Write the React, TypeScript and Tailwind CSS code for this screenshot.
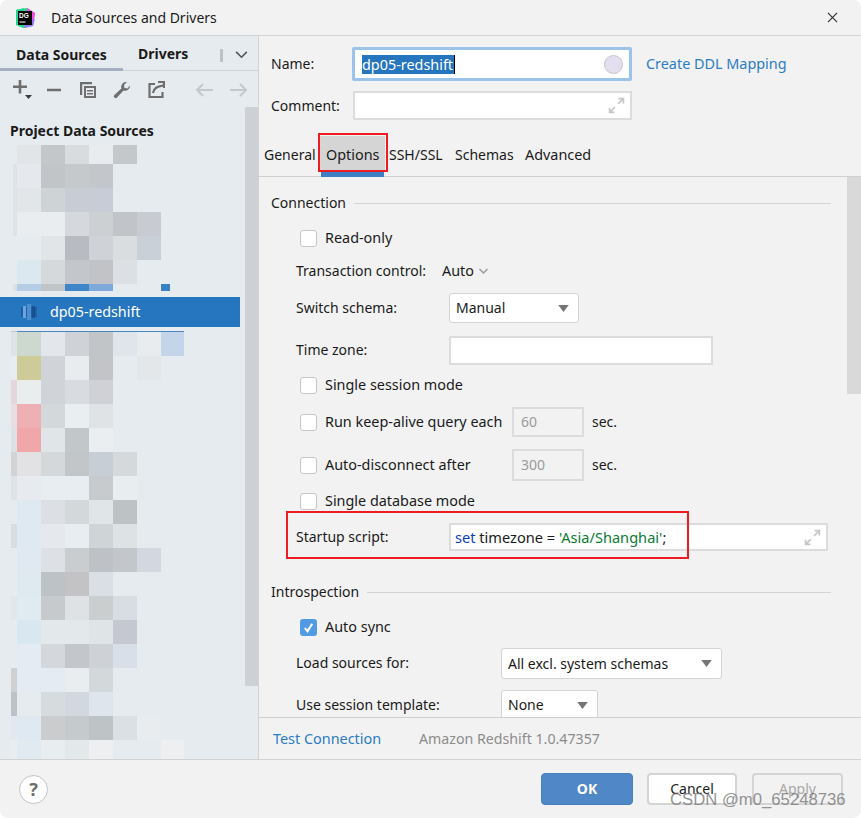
import React from 'react';

const font = { fontFamily: '"Noto Sans", sans-serif' };

// blurred tree rows from the reference: [top, height, [x, width, colour]...]
type Cell = [number, number, string];
const mosaic: [number, number, Cell[]][] = [
  [145, 19, [[17, 24, '#e1e5e8'], [41, 24, '#c3c7ca'], [65, 24, '#d8dcdf'], [89, 24, '#e8ecef'], [113, 24, '#c4c8cb']]],
  [164, 24, [[13, 4, '#dfe3e8'], [17, 24, '#e5e8ec'], [41, 24, '#c1c5c8'], [65, 24, '#c5c9cc'], [89, 24, '#c3c6ca']]],
  [188, 24, [[13, 4, '#dfe3e8'], [17, 24, '#e3e6e9'], [41, 24, '#ced3d6'], [65, 24, '#c8ccd5'], [89, 24, '#c8ccd6']]],
  [212, 24, [[13, 4, '#dfe3e8'], [17, 48, '#e9edf0'], [65, 24, '#d5d8dc'], [89, 24, '#cdd0d3'], [113, 24, '#c1c4c8'], [137, 24, '#c8cbd2']]],
  [236, 24, [[41, 24, '#e1e5e8'], [65, 24, '#b8bcc2'], [89, 24, '#cfd2d6'], [113, 24, '#d9dde0'], [137, 24, '#cad0d8']]],
  [260, 24, [[17, 24, '#dce8f0'], [41, 24, '#d5d9dc'], [65, 24, '#c3c6ca'], [89, 24, '#c1c3c7'], [113, 24, '#dcdfe3']]],
  [284, 7, [[13, 4, '#dde1e4'], [17, 24, '#b5cde5'], [41, 24, '#c0c5c8'], [65, 24, '#3f85c9'], [89, 24, '#7ea9d8'], [161, 9, '#3a80c6']]],
  [331, 1, [[11, 6, '#c5c8cc'], [17, 167, '#5088c6']]],
  [332, 24, [[11, 6, '#e0e3e6'], [17, 24, '#cdd8cf'], [41, 24, '#e3e6eb'], [65, 24, '#cfd2d6'], [89, 24, '#c2c5c8'], [113, 24, '#e0e5ec'], [137, 24, '#e8ecef'], [161, 23, '#c5d5e9']]],
  [356, 24, [[11, 6, '#e9edf0'], [17, 24, '#cdcb97'], [41, 24, '#d0d3d8'], [65, 24, '#e8ecef'], [89, 24, '#c3c4c7'], [137, 24, '#e3e7ea']]],
  [380, 24, [[11, 6, '#e5d5dc'], [17, 24, '#e9edee'], [41, 24, '#d0d3d7'], [65, 24, '#d8dce0'], [89, 24, '#cfd1d6']]],
  [404, 24, [[11, 6, '#e8dde3'], [17, 24, '#eeb0b3'], [41, 24, '#d3d8db'], [65, 24, '#e9eef1'], [89, 24, '#dfe3e6']]],
  [428, 24, [[11, 6, '#dde1e3'], [17, 24, '#efa7aa'], [41, 24, '#e0e5e8'], [65, 24, '#c2c7ca'], [89, 24, '#ebeef1']]],
  [452, 24, [[11, 6, '#d2d3d4'], [17, 24, '#e2e2e4'], [41, 24, '#d4d8db'], [65, 24, '#c3c6c9'], [89, 24, '#c8ced5'], [113, 24, '#d5d9dc']]],
  [476, 24, [[11, 6, '#dfe3e8'], [17, 24, '#e7eaee'], [41, 48, '#e8edf1'], [89, 24, '#c7cbce'], [113, 24, '#e8edf0']]],
  [500, 24, [[17, 24, '#dfe9f1'], [41, 24, '#dce0e5'], [65, 24, '#d3d8db'], [89, 24, '#e0e5e8'], [113, 24, '#bdc2c4']]],
  [524, 24, [[11, 6, '#d9dde0'], [17, 24, '#dfe9f1'], [41, 24, '#e5e9ed'], [65, 24, '#e8edf1'], [89, 24, '#cfd4d7'], [113, 24, '#dde2e5']]],
  [548, 24, [[17, 24, '#e0e9f1'], [41, 24, '#dde0e5'], [65, 24, '#c9cdcf'], [89, 24, '#bec1c5'], [113, 24, '#c3c6ca'], [137, 24, '#d3d8e0']]],
  [572, 24, [[17, 24, '#dfeaf0'], [41, 24, '#bcc2c5'], [65, 24, '#c3c3c6'], [89, 24, '#dadee5']]],
  [596, 24, [[11, 6, '#e3e7ea'], [17, 24, '#e0eaf1'], [41, 24, '#c6cacc'], [65, 24, '#dfe2e5'], [89, 24, '#cbcecf'], [113, 24, '#d8dce3']]],
  [620, 24, [[17, 24, '#d9e8f0'], [41, 48, '#e3e8eb'], [89, 24, '#dfe4e7'], [113, 24, '#c5c8d0']]],
  [644, 24, [[17, 24, '#e5ebf2'], [41, 24, '#d4d8dc'], [65, 24, '#c3c6ca'], [89, 24, '#ced1d5'], [113, 24, '#d8dfe8']]],
  [668, 24, [[11, 6, '#cfd0d2'], [17, 48, '#e5ebf2'], [65, 24, '#e9edf0'], [89, 24, '#d3d8db']]],
  [692, 24, [[11, 6, '#bdc2c8'], [41, 24, '#d6dbde'], [65, 24, '#d3d8e0'], [89, 24, '#dfe5ec']]],
  [716, 24, [[11, 6, '#e3e8f0'], [17, 24, '#dfe9f2'], [41, 24, '#cbcccd'], [65, 24, '#c5cacd'], [89, 24, '#bec3c5'], [113, 24, '#dbe0e4'], [137, 24, '#e8ecef']]],
  [740, 19, [[11, 6, '#e9edf0'], [17, 24, '#e1e9f1'], [41, 24, '#e8edf0'], [65, 24, '#e3e8ea'], [89, 24, '#eeeff0'], [161, 23, '#eeeff0']]],
];

function ExpandIcon() {
  return (
    <svg viewBox="0 0 16 16" className="w-[17px] h-[17px]" fill="none" stroke="#c4c8c8" strokeWidth="1.6">
      <path d="M9.5 6.5 14 2M10 1.5h4.5V6" />
      <path d="M6.5 9.5 2 14M1.5 10v4.500H6" />
    </svg>
  );
}

function Caret() {
  return (
    <svg viewBox="0 0 12 8" className="w-[11px] h-[7px]" fill="#757575">
      <path d="M0 0h12L6 8z" />
    </svg>
  );
}

function Checkbox({ label, checked }: { label: string; checked?: boolean }) {
  return (
    <div className="flex items-center ml-[29px] h-[24px]">
      {checked ? (
        <div className="w-[17px] h-[17px] rounded-[3px] bg-[#509be4] flex items-center justify-center">
          <svg viewBox="0 0 14 14" className="w-[13px] h-[13px]" fill="none" stroke="#fff" strokeWidth="2.2">
            <path d="M3 7.500 6 11l5-8" />
          </svg>
        </div>
      ) : (
        <div className="w-[17px] h-[17px] rounded-[3px] bg-white border border-[#c6c6c6]" />
      )}
      <span className="ml-[8px] whitespace-nowrap text-[14.4px]">{label}</span>
    </div>
  );
}

function Select({ value, className }: { value: string; className: string }) {
  return (
    <div className={`flex items-center justify-between bg-white border border-[#d4d4d4] rounded-[3px] pl-[6px] pr-[9px] ${className}`}>
      <span className="whitespace-nowrap">{value}</span>
      <Caret />
    </div>
  );
}

function Section({ title, className }: { title: string; className: string }) {
  return (
    <div className={`flex items-center h-[20px] mr-[30px] ${className}`}>
      <span>{title}</span>
      <div className="flex-1 h-px bg-[#d4d4d4] ml-[8px]" />
    </div>
  );
}

function NumberRow({ label, value, className }: { label: string; value: string; className: string }) {
  return (
    <div className={`flex items-center ${className}`}>
      <div className="w-[241px]">
        <Checkbox label={label} />
      </div>
      <div className="w-[72px] h-full border-2 border-[#dcdcdc] flex items-center pl-[7px] text-[#9a9a9a]">{value}</div>
      <span className="ml-[8px]">sec.</span>
    </div>
  );
}

function Sidebar() {
  return (
    <div className="w-[259px] shrink-0 bg-[#e6ebf0] border-r border-[#d2d2d2] relative overflow-hidden">
      <div className="h-[35px] flex items-end border-b border-[#d0d3d6] relative font-bold">
        <div className="w-[123px] h-[35px] pl-[16px] pt-[9px] border-b-[3px] border-[#a4b0c2] shrink-0 -mb-px">Data Sources</div>
        <div className="h-[35px] pt-[9px] ml-[15px]">Drivers</div>
        <div className="absolute left-[220px] top-[13px] w-[3px] h-[13px] bg-[#bfc2c4]" />
        <svg viewBox="0 0 14 9" className="absolute left-[235px] top-[15px] w-[13px] h-[8px]" fill="none" stroke="#555" strokeWidth="1.8">
          <path d="M1 1l6 6 6-6" />
        </svg>
      </div>

      {/* toolbar */}
      <div className="h-[37px] flex items-center pl-[13px]">
        <svg viewBox="0 0 20 22" className="w-[20px] h-[22px]" fill="#6e6e6e">
          <path d="M0 6.500h14V9H0zM5.700 1h2.600v13.500H5.700z" />
          <path d="M12 16h7l-3.500 4z" fill="#3c3c3c" />
        </svg>
        <svg viewBox="0 0 14 14" className="w-[14px] h-[14px] ml-[14px]" fill="#6e6e6e">
          <path d="M0 5.800h14v2.400H0z" />
        </svg>
        <svg viewBox="0 0 16 16" className="w-[16px] h-[16px] ml-[19px]" fill="#6e6e6e">
          <path d="M0 0h12v2.200H2.200V13H0z" />
          <path fillRule="evenodd" d="M4 4h12v12H4zM6 6v8h8V6z" />
          <path d="M7 8h6v1.500H7zM7 11h6v1.500H7z" />
        </svg>
        <svg viewBox="0 0 18 18" className="w-[18px] h-[18px] ml-[17px]" fill="#6e6e6e">
          <path d="M17 4.500a5 5 0 0 1-6.500 5L4 16.500a1.800 1.800 0 0 1-2.600-2.600l7-6.500A5 5 0 0 1 14 1l-3 3 .5 3 3 .5 2.300-3z" />
        </svg>
        <svg viewBox="0 0 17 17" className="w-[17px] h-[17px] ml-[17px]" fill="none" stroke="#6e6e6e" strokeWidth="2.2">
          <path d="M7 3H1.500v13h13v-5" />
          <path d="M5 12C6 7 9 5.500 15 4.500" />
          <path d="M10 1h6v6" />
        </svg>
        <svg viewBox="0 0 18 14" className="w-[18px] h-[14px] ml-[30px]" fill="none" stroke="#c6c9cc" strokeWidth="2">
          <path d="M18 7H2M8 1 2 7l6 6" />
        </svg>
        <svg viewBox="0 0 18 14" className="w-[18px] h-[14px] ml-[17px]" fill="none" stroke="#c6c9cc" strokeWidth="2">
          <path d="M0 7h16M10 1l6 6-6 6" />
        </svg>
      </div>

      <div className="pl-[10px] mt-[13px] font-bold leading-[20px]">Project Data Sources</div>

      {/* blurred tree */}
      <svg className="absolute left-0 top-0 w-[240px] h-[723px]" viewBox="0 36 240 723" shapeRendering="crispEdges">
        {mosaic.map(([top, height, cells]) =>
          cells.map(([x, width, color]) => <rect key={`${top}-${x}`} x={x} y={top} width={width} height={height} fill={color} />)
        )}
      </svg>

      <div className="absolute left-0 top-[261px] w-[240px] h-[30px] bg-[#2675bf] flex items-center text-white pl-[20px]">
        <svg viewBox="0 0 18 18" className="w-[18px] h-[18px]">
          <path d="M1 4h16v10H1z" fill="#1f5fa3" />
          <path d="M3 3h3v12H3z" fill="#6aa5dd" />
          <path d="M7 1h4v16H7z" fill="#4c8fd0" />
          <path d="M12 3h3v12h-3z" fill="#17528f" />
        </svg>
        <span className="ml-[12px] text-[14.3px]">dp05-redshift</span>
      </div>

      {/* scrollbar */}
      <div className="absolute left-[245px] top-[71px] w-[13px] h-[579px] bg-[#cdd1d6]" />
    </div>
  );
}

function MainPane() {
  return (
    <div className="flex-1 flex flex-col min-w-0 relative">
      <div className="h-[141px] shrink-0 relative">
        <div className="flex items-center mt-[11px] h-[34px] pl-[12px]">
          <span className="w-[81px]">Name:</span>
          <div className="w-[280px] h-[34px] border-[3px] border-[#9cc3ea] rounded-[2px] bg-white flex items-center pl-[7px] pr-[6px] justify-between">
            <span className="bg-[#2675bf] text-white text-[14.4px] h-[19px] leading-[19px] pr-[1px] border-r border-black">dp05-redshift</span>
            <div className="w-[19px] h-[19px] rounded-full bg-[#e4dfee] border border-[#c8c4d0]" />
          </div>
          <span className="ml-[14px] text-[14.4px] text-[#2b7cc4]">Create DDL Mapping</span>
        </div>
        <div className="flex items-center mt-[10px] h-[29px] pl-[12px]">
          <span className="w-[82px]">Comment:</span>
          <div className="w-[279px] h-[29px] border-2 border-[#dcdcdc] bg-white flex items-center justify-end pr-[5px]">
            <ExpandIcon />
          </div>
        </div>

        <div className="absolute left-0 top-[100px] h-[41px] w-full flex border-b border-[#cfcfcf]">
          <div className="pl-[5px] w-[61px] pt-[9px]">General</div>
          <div className="w-[65px] h-[36px] bg-[#d5d5d5] pt-[9px] pl-[6px] text-[14.4px]">Options</div>
          <div className="pl-[4px] w-[70px] pt-[9px]">SSH/SSL</div>
          <div className="w-[70px] pt-[9px]">Schemas</div>
          <div className="pt-[9px] text-[14.4px]">Advanced</div>
          <div className="absolute left-[62px] top-[36px] w-[63px] h-[5px] bg-[#3c7fc4]" />
        </div>
        {/* annotation around the active tab */}
        <div className="absolute left-[59px] top-[97px] w-[70px] h-[39px] border-2 border-[#ed1c24]" />
      </div>

      <div className="h-[541px] shrink-0 overflow-hidden relative pl-[12px] border-b border-[#cfcfcf]">
        <Section title="Connection" className="mt-[16px]" />
        <div className="mt-[13px]">
          <Checkbox label="Read-only" />
        </div>
        <div className="flex items-center mt-[9px] h-[24px] ml-[25px]">
          <span className="w-[146px]">Transaction control:</span>
          <span className="text-[14.4px]">Auto</span>
          <svg viewBox="0 0 10 7" className="w-[11px] h-[7px] ml-[4px]" fill="none" stroke="#9a9a9a" strokeWidth="1.5">
            <path d="M1 1l4 4 4-4" />
          </svg>
        </div>
        <div className="flex items-center mt-[10px] h-[30px] ml-[25px]">
          <span className="w-[153px]">Switch schema:</span>
          <Select value="Manual" className="w-[130px] h-[30px]" />
        </div>
        <div className="flex items-center mt-[13px] h-[29px] ml-[25px]">
          <span className="w-[153px] -mt-[2px]">Time zone:</span>
          <div className="w-[264px] h-[29px] bg-white border-2 border-[#dcdcdc]" />
        </div>
        <div className="mt-[8px]">
          <Checkbox label="Single session mode" />
        </div>
        <NumberRow label="Run keep-alive query each" value="60" className="mt-[10px] h-[30px]" />
        <NumberRow label="Auto-disconnect after" value="300" className="mt-[12px] h-[32px]" />
        <div className="mt-[8px]">
          <Checkbox label="Single database mode" />
        </div>
        <div className="flex items-center mt-[10px] h-[28px] ml-[25px] mr-[33px]">
          <span className="w-[153px] shrink-0">Startup script:</span>
          <div className="flex-1 h-[28px] bg-white border-2 border-[#dcdcdc] flex items-center justify-between pl-[4px] pr-[5px]">
            <span className="text-[14.6px]">
              <span className="text-[#0b3fbf]">set</span> timezone = <span className="text-[#0a7d32]">'Asia/Shanghai'</span>;
            </span>
            <ExpandIcon />
          </div>
        </div>
        <Section title="Introspection" className="mt-[31px]" />
        <div className="mt-[13px]">
          <Checkbox label="Auto sync" checked />
        </div>
        <div className="flex items-center mt-[9px] h-[31px] ml-[25px]">
          <span className="w-[205px] -mt-[2px]">Load sources for:</span>
          <Select value="All excl. system schemas" className="w-[221px] h-[31px]" />
        </div>
        <div className="flex items-center mt-[11px] h-[30px] ml-[25px]">
          <span className="w-[205px]">Use session template:</span>
          <Select value="None" className="w-[97px] h-[30px]" />
        </div>
        {/* annotation around the startup script row */}
        <div className="absolute left-[27px] top-[334px] w-[403px] h-[48px] border-2 border-[#ed1c24]" />
        <div className="absolute right-0 top-0 w-[14px] h-[217px] bg-[#d9d9d9]" />
      </div>

      <div className="h-[41px] shrink-0 flex items-center pl-[14px]">
        <span className="text-[#2b7cc4] text-[14.4px] w-[146px]">Test Connection</span>
        <span className="text-[#8c8c8c] text-[14.2px]">Amazon Redshift 1.0.47357</span>
      </div>
    </div>
  );
}

export default function App() {
  return (
    <div className="w-[861px] h-[818px] relative bg-white overflow-hidden text-[14px] text-[#1a1a1a] leading-[20px]" style={font}>
      <div className="absolute inset-0 bg-[#f2f2f2] rounded-[8px] flex flex-col overflow-hidden">
        <div className="h-[36px] shrink-0 flex items-center border-b border-[#d4d4d4] pl-[15px] pr-[23px]">
          <svg viewBox="0 0 20 20" className="w-[20px] h-[20px]">
            <path d="M1 2 12 0l8 5-2 13-10 2-7-3z" fill="#22d88f" />
            <path d="M1 2 9 0 7 12 2 17z" fill="#21d789" />
            <path d="M12 0l8 5-2 13-6-2z" fill="#ff45ed" />
            <path d="M9 20l9-2 2-7-8 1z" fill="#9775f8" />
            <rect x="3" y="3" width="14" height="14" fill="#000" />
            <text x="4" y="10" fontSize="6.500" fontWeight="700" fill="#fff" fontFamily="Liberation Sans">DG</text>
            <rect x="4.500" y="13.500" width="6" height="1" fill="#fff" />
          </svg>
          <span className="ml-[16px] flex-1">Data Sources and Drivers</span>
          <svg viewBox="0 0 12 12" className="w-[11px] h-[11px]" fill="none" stroke="#333" strokeWidth="1.3">
            <path d="M1 1l10 10M11 1 1 11" />
          </svg>
        </div>

        <div className="h-[723px] shrink-0 flex">
          <Sidebar />
          <MainPane />
        </div>

        <div className="flex-1 border-t border-[#d2d2d2] flex items-center pl-[19px] pr-[18px]">
          <div className="w-[29px] h-[29px] rounded-full bg-white border border-[#c4c4c4] flex items-center justify-center font-bold text-[18px] text-[#6e6e6e]">?</div>
          <div className="flex-1" />
          <div className="w-[92px] h-[32px] rounded-[4px] bg-[#4f87c7] border border-[#4a7fbc] text-white font-bold flex items-center justify-center">OK</div>
          <div className="ml-[14px] w-[90px] h-[32px] rounded-[4px] bg-white border-2 border-[#d4d4d4] flex items-center justify-center">Cancel</div>
          <div className="ml-[15px] w-[91px] h-[32px] rounded-[4px] border-2 border-[#d4d4d4] text-[#a8a8a8] flex items-center justify-center">Apply</div>
        </div>
      </div>

      {/* image watermark */}
      <div className="absolute left-[670px] top-[790px] text-[16.7px] leading-[20px] text-[#777]/80 whitespace-nowrap" style={{ fontFamily: '"Liberation Sans", sans-serif' }}>
        CSDN @m0_65248736
      </div>
    </div>
  );
}
